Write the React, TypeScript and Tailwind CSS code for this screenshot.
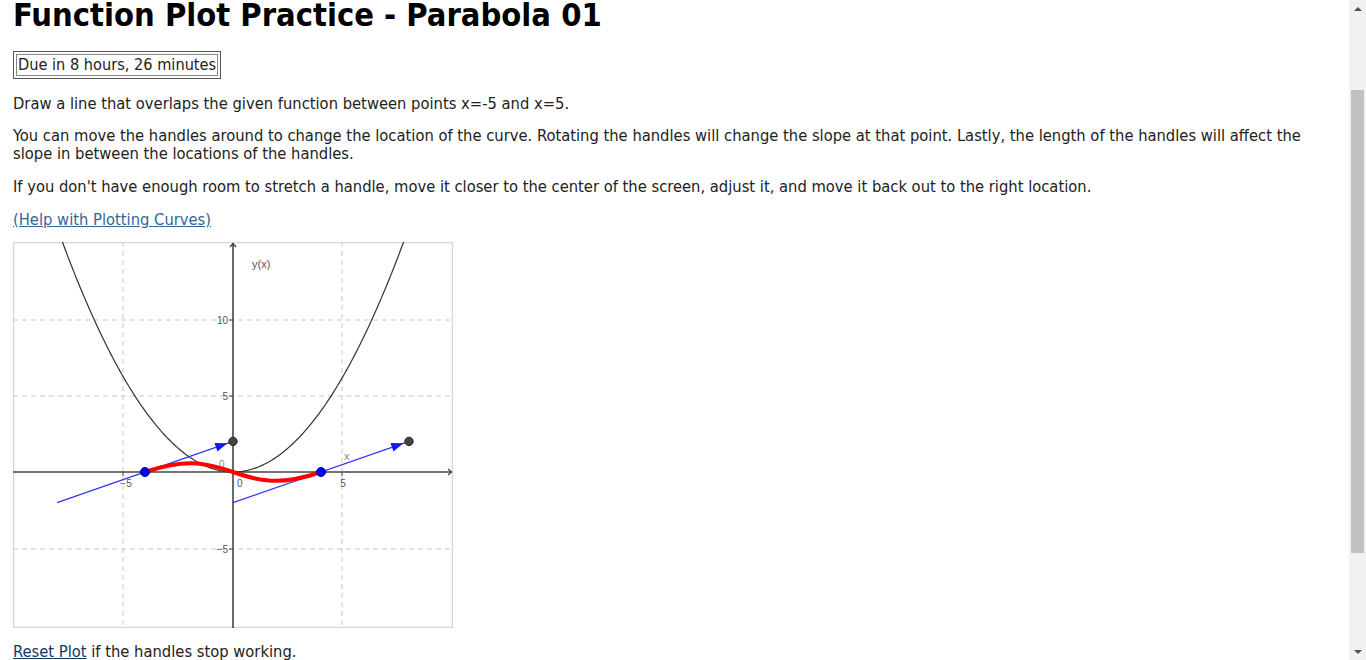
import React from "react";

const X0 = 220;
const Y0 = 230;
const SX = 22;
const SY = 15.3;

function parabolaPath(): string {
  const pts: string[] = [];
  for (let i = 0; i <= 160; i++) {
    const x = -7.8 + (15.6 * i) / 160;
    const y = (x * x) / 4;
    const px = X0 + SX * x;
    const py = Y0 - SY * y;
    pts.push(`${i === 0 ? "M" : "L"}${px.toFixed(2)},${py.toFixed(2)}`);
  }
  return pts.join(" ");
}

function Arrow({ x1, y1, x2, y2 }: { x1: number; y1: number; x2: number; y2: number }) {
  const dx = x2 - x1;
  const dy = y2 - y1;
  const len = Math.hypot(dx, dy);
  const ux = dx / len;
  const uy = dy / len;
  const tipX = x2 - ux * 6;
  const tipY = y2 - uy * 6;
  const bX = tipX - ux * 12;
  const bY = tipY - uy * 12;
  const nx = -uy;
  const ny = ux;
  const w = 4.5;
  return (
    <polygon
      points={`${tipX},${tipY} ${bX + nx * w},${bY + ny * w} ${bX - nx * w},${bY - ny * w}`}
      fill="#1414ff"
    />
  );
}

function Plot() {
  const W = 440;
  const H = 386;
  const ax = { x: 132, y: 230 };
  const af = { x: 220, y: 199.4 };
  const ab = { x: 44, y: 260.6 };
  const bx = { x: 308, y: 230 };
  const bf = { x: 396, y: 199.4 };
  const bb = { x: 220, y: 260.6 };
  const grid = "#c8c8c8";
  const label = "#555";
  return (
    <svg width={W} height={H} viewBox={`0 0 ${W} ${H}`} className="block">
      <rect x={0.5} y={0.5} width={W - 1} height={H - 1} fill="#fff" stroke="#d6d6d6" strokeWidth={1.5} />
      <g stroke={grid} strokeWidth={1} strokeDasharray="5,4">
        <line x1={110} y1={0} x2={110} y2={H} />
        <line x1={329} y1={0} x2={329} y2={H} />
        <line x1={0} y1={78} x2={W} y2={78} />
        <line x1={0} y1={154} x2={W} y2={154} />
        <line x1={0} y1={307} x2={W} y2={307} />
      </g>
      <g stroke="#444" strokeWidth={1.6} fill="none">
        <line x1={X0} y1={1} x2={X0} y2={H} />
        <line x1={0} y1={Y0} x2={W - 1} y2={Y0} />
        <polyline points={`${X0 - 3},${5} ${X0},${1.5} ${X0 + 3},${5}`} strokeWidth={1.3} />
        <polyline points={`${W - 5},${Y0 - 3} ${W - 1.5},${Y0} ${W - 5},${Y0 + 3}`} strokeWidth={1.3} />
        <line x1={X0 - 4} y1={78} x2={X0} y2={78} strokeWidth={1} />
        <line x1={X0 - 4} y1={154} x2={X0} y2={154} strokeWidth={1} />
        <line x1={X0 - 4} y1={307} x2={X0} y2={307} strokeWidth={1} />
        <line x1={110} y1={Y0} x2={110} y2={Y0 + 4} strokeWidth={1} />
        <line x1={329} y1={Y0} x2={329} y2={Y0 + 4} strokeWidth={1} />
      </g>
      <g fill={label} fontFamily="'Liberation Sans', Arial, sans-serif" fontSize={10}>
        <text x={X0 - 5} y={81.5} textAnchor="end">10</text>
        <text x={X0 - 5} y={157.5} textAnchor="end">5</text>
        <text x={X0 - 5} y={310.5} textAnchor="end">−5</text>
        <text x={113} y={245} textAnchor="middle">−5</text>
        <text x={330} y={245} textAnchor="middle">5</text>
        <text x={224} y={245}>0</text>
        <text x={206} y={226} fill="#888">0</text>
        <text x={331} y={218} fill="#888" fontSize={11}>x</text>
        <text x={239} y={26} fontSize={11}>y(x)</text>
      </g>
      <path d={parabolaPath()} fill="none" stroke="#333" strokeWidth={1.2} />
      <g stroke="#3333ff" strokeWidth={1.2}>
        <line x1={ab.x} y1={ab.y} x2={af.x} y2={af.y} />
        <line x1={bb.x} y1={bb.y} x2={bf.x} y2={bf.y} />
      </g>
      <Arrow x1={ax.x} y1={ax.y} x2={af.x} y2={af.y} />
      <Arrow x1={bx.x} y1={bx.y} x2={bf.x} y2={bf.y} />
      <path
        d={`M${ax.x},${ax.y} C${af.x},${af.y} ${bb.x},${bb.y} ${bx.x},${bx.y}`}
        fill="none"
        stroke="#ff0000"
        strokeWidth={4}
        strokeLinecap="round"
      />
      <circle cx={af.x} cy={af.y} r={4.2} fill="#444" stroke="#222" strokeWidth={1} />
      <circle cx={bf.x} cy={bf.y} r={4.2} fill="#444" stroke="#222" strokeWidth={1} />
      <circle cx={ax.x} cy={ax.y} r={4.5} fill="#0000ff" stroke="#00008b" strokeWidth={1} />
      <circle cx={bx.x} cy={bx.y} r={4.5} fill="#0000ff" stroke="#00008b" strokeWidth={1} />
    </svg>
  );
}

function Scrollbar() {
  return (
    <div className="flex h-[660px] w-[17px] shrink-0 flex-col items-center bg-[#f1f1f1]">
      <div className="flex h-[17px] w-full items-center justify-center">
        <div className="h-0 w-0 border-x-[4px] border-b-[4px] border-x-transparent border-b-[#505050]" />
      </div>
      <div className="mt-[73px] h-[463px] w-[13px] bg-[#c1c1c1]" />
      <div className="flex-1" />
      <div className="flex h-[17px] w-full items-center justify-center">
        <div className="h-0 w-0 border-x-[4px] border-t-[4px] border-x-transparent border-t-[#505050]" />
      </div>
    </div>
  );
}

export default function App() {
  return (
    <div className="flex h-[660px] w-[1366px] overflow-hidden bg-white">
      <div className="flex-1 overflow-hidden pl-[13px] pr-[4px] font-['DejaVu_Sans_Condensed','DejaVu_Sans',sans-serif] text-[16.4px] leading-[18px] text-[#222]">
        <h1 className="whitespace-nowrap text-[32.4px] font-bold leading-[30px] text-black">
          Function Plot Practice - Parabola 01
        </h1>
        <div className="mt-[21px] inline-block border border-[#555] p-[2px]">
          <div className="whitespace-nowrap border border-[#888] px-[1px] text-[16.2px] leading-[20px]">
            Due in 8 hours, 26 minutes
          </div>
        </div>
        <p className="mt-[16px] whitespace-nowrap">
          Draw a line that overlaps the given function between points x=-5 and x=5.
        </p>
        <p className="mt-[14px] whitespace-nowrap">
          You can move the handles around to change the location of the curve. Rotating the handles will change the
          slope at that point. Lastly, the length of the handles will affect the
          <br />
          slope in between the locations of the handles.
        </p>
        <p className="mt-[15px] whitespace-nowrap">
          If you don't have enough room to stretch a handle, move it closer to the center of the screen, adjust it,
          and move it back out to the right location.
        </p>
        <p className="mt-[15px]">
          <a className="text-[#336699] underline">(Help with Plotting Curves)</a>
        </p>
        <div className="mt-[13px]">
          <Plot />
        </div>
        <p className="mt-[15px] whitespace-nowrap">
          <a className="text-[#0b3a6b] underline">Reset Plot</a> if the handles stop working.
        </p>
      </div>
      <Scrollbar />
    </div>
  );
}
